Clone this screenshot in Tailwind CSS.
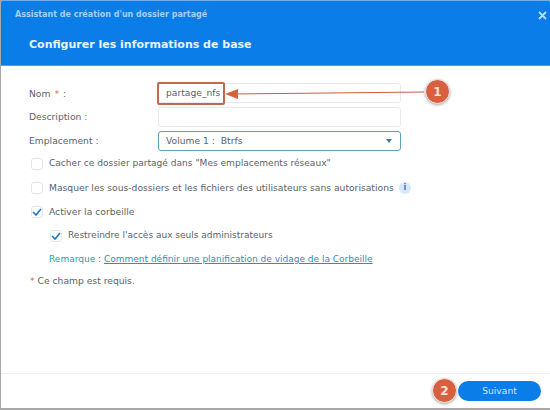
<!DOCTYPE html>
<html>
<head>
<meta charset="utf-8" />
<title>Assistant de création d'un dossier partagé</title>
<script src="https://cdn.jsdelivr.net/npm/@tailwindcss/browser@4"></script>
</head>
<body class="w-[550px] h-[410px] overflow-hidden bg-[#a8a8a8] font-['DejaVu_Sans',sans-serif] text-[9.2px] text-[#59626c]">
<div class="relative w-[550px] h-[408px] pl-px">
  <div class="flex flex-col h-full bg-white rounded-t-[3px] overflow-hidden">
    <!-- header -->
    <div class="relative h-[66px] shrink-0 bg-[#0a7de8] border-t border-t-[#6fb0ee] border-b border-b-[#4d9bea] pl-[14px]">
      <div class="pt-[8px] text-[8px] font-bold leading-[12px] text-[#a3d0fa]">Assistant de création d'un dossier partagé</div>
      <div class="pt-[15px] pl-[14px] text-[11px] font-bold leading-[18px] text-[#e6f3fe]">Configurer les informations de base</div>
      <svg class="absolute right-[3px] top-[10px] w-[9px] h-[9px]" viewBox="0 0 9 9"><path d="M1 1l7 7M8 1l-7 7" stroke="#b5dcfb" stroke-width="1.8" fill="none"/></svg>
    </div>

    <!-- form -->
    <div class="flex-1 pl-[28px] pt-[17px]">
      <div class="flex flex-col gap-[4px]">
        <div class="flex items-center h-[20px]">
          <div class="w-[129px] pt-[1px]">Nom <span class="mx-[1px] text-[#e0644c]">*</span> :</div>
          <div class="w-[243px] h-[20px] rounded-[3px] border border-[#e6eaee] pl-[7px] leading-[18px]">partage_nfs</div>
        </div>
        <div class="flex items-center h-[20px]">
          <div class="w-[129px]">Description :</div>
          <div class="w-[243px] h-[20px] rounded-[3px] border border-[#e6eaee]"></div>
        </div>
        <div class="flex items-center h-[20px]">
          <div class="w-[129px]">Emplacement :</div>
          <div class="flex items-center justify-between w-[243px] h-[20px] rounded-[3px] border border-[#5d9fb4] pl-[7px] pr-[8px]">
            <span class="whitespace-pre">Volume 1 :  Btrfs</span>
            <svg class="w-[6px] h-[4px]" viewBox="0 0 6 4"><path d="M0 0h6L3 4z" fill="#3f7b9c"/></svg>
          </div>
        </div>
      </div>

      <div class="flex items-center h-[14px] mt-[6px] pl-[2px] text-[9.05px]">
        <span class="w-[12px] h-[12px] rounded-[3px] border border-[#e3e7ea] mr-[6px]"></span>
        <span>Cacher ce dossier partagé dans "Mes emplacements réseaux"</span>
      </div>
      <div class="flex items-center h-[14px] mt-[10px] pl-[2px]">
        <span class="w-[12px] h-[12px] rounded-[3px] border border-[#e3e7ea] mr-[6px]"></span>
        <span>Masquer les sous-dossiers et les fichiers des utilisateurs sans autorisations</span>
        <span class="flex items-center justify-center w-[12px] h-[12px] ml-[5px] rounded-full bg-[#d5e9fb] text-[8px] font-bold leading-none text-[#2b7fc4]">i</span>
      </div>
      <div class="flex items-center h-[14px] mt-[10px] pl-[2px]">
        <span class="flex items-center justify-center w-[12px] h-[12px] rounded-[3px] border border-[#e3e7ea] mr-[6px]">
          <svg class="w-[10px] h-[8px]" viewBox="0 0 10 8"><path d="M1 4l3 3 5-6" stroke="#1a78c8" stroke-width="1.6" fill="none"/></svg>
        </span>
        <span>Activer la corbeille</span>
      </div>
      <div class="flex items-center h-[14px] mt-[10px] pl-[21px] text-[9px]">
        <span class="flex items-center justify-center w-[12px] h-[12px] rounded-[3px] border border-[#e3e7ea] mr-[6px]">
          <svg class="w-[10px] h-[8px]" viewBox="0 0 10 8"><path d="M1 4l3 3 5-6" stroke="#1a78c8" stroke-width="1.6" fill="none"/></svg>
        </span>
        <span>Restreindre l'accès aux seuls administrateurs</span>
      </div>
      <div class="h-[14px] mt-[9px] pl-[20px] leading-[14px] text-[9px]">
        <span class="text-[#2aa39a]">Remarque</span> : <span class="text-[#2d8ec4] underline">Comment définir une planification de vidage de la Corbeille</span>
      </div>
      <div class="h-[14px] mt-[8px] pl-[1px] leading-[14px]"><span class="text-[#e0644c]">*</span> Ce champ est requis.</div>
    </div>

    <!-- footer -->
    <div class="flex justify-end items-center h-[35px] shrink-0 border-t border-[#eef0f2] pr-[9px]">
      <div class="w-[83px] h-[20px] rounded-full bg-[#0a7de8] text-center leading-[20px] text-[#cfe6fb]">Suivant</div>
    </div>
  </div>

  <!-- annotations -->
  <div class="absolute left-[157px] top-[82px] w-[68px] h-[23px] border-2 border-[#c0694f] rounded-[2px]"></div>
  <svg class="absolute left-[224px] top-[80px] w-[204px] h-[20px]" viewBox="0 0 204 20"><path d="M8 14L200 12" stroke="#cd5c40" stroke-width="1.2"/><path d="M1 14l13-5v10z" fill="#d9603f"/></svg>
  <div class="absolute left-[425px] top-[79px] flex items-center justify-center w-[25px] h-[25px] rounded-full bg-[#d9603f] border border-[#eee] shadow-[0_1px_3px_rgba(0,0,0,0.35)] text-[12px] font-bold text-[#f6e3dc]">1</div>
  <div class="absolute left-[432px] top-[378px] flex items-center justify-center w-[25px] h-[25px] rounded-full bg-[#d9603f] border border-[#eee] shadow-[0_1px_3px_rgba(0,0,0,0.35)] text-[12px] font-bold text-[#f6e3dc]">2</div>
</div>
</body>
</html>
